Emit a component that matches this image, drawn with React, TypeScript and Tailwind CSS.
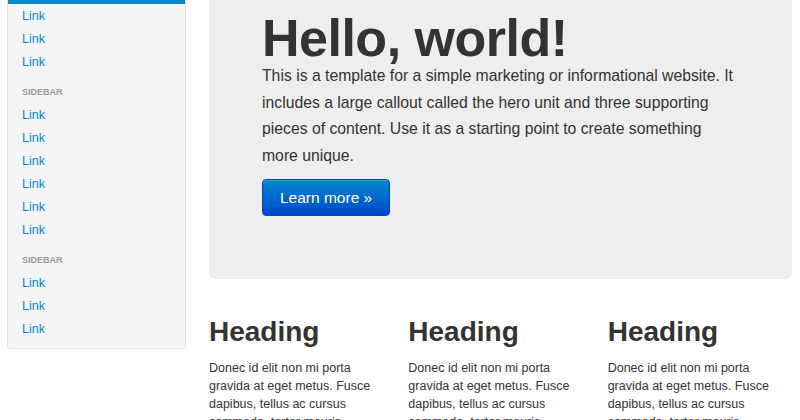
const links1 = ["Link", "Link", "Link"];
const links2 = ["Link", "Link", "Link", "Link", "Link", "Link"];
const links3 = ["Link", "Link", "Link"];

const body =
  "Donec id elit non mi porta gravida at eget metus. Fusce dapibus, tellus ac cursus commodo, tortor mauris condimentum nibh, ut fermentum massa justo sit amet risus. Etiam porta sem malesuada magna mollis euismod. Donec sed odio dui.";

function NavLink({ label }: { label: string }) {
  return (
    <li>
      <a href="#" className="block px-[14px] leading-[23px] text-[12.5px] text-[#0088cc]">
        {label}
      </a>
    </li>
  );
}

function NavHeader({ label }: { label: string }) {
  return (
    <li className="mt-[7px] px-[14px] leading-[23px] text-[9px] font-bold uppercase text-[#999999]">
      {label}
    </li>
  );
}

function Sidebar() {
  return (
    <div className="w-[179px] shrink-0 self-start rounded-b-[4px] border-x border-b border-[#e3e3e3] bg-[#f5f5f5] pb-[7px] shadow-[inset_0_1px_1px_rgba(0,0,0,0.05)]">
      <div className="h-[4px] bg-[#0088cc]" />
      <ul className="pt-[1px]">
        {links1.map((l, i) => (
          <NavLink key={"a" + i} label={l} />
        ))}
        <NavHeader label="Sidebar" />
        {links2.map((l, i) => (
          <NavLink key={"b" + i} label={l} />
        ))}
        <NavHeader label="Sidebar" />
        {links3.map((l, i) => (
          <NavLink key={"c" + i} label={l} />
        ))}
      </ul>
    </div>
  );
}

function Column() {
  return (
    <div>
      <h2 className="text-[28px] font-bold leading-[40px] text-[#333333]">Heading</h2>
      <p className="mt-[7px] text-[12.5px] leading-[18px] text-[#333333]">{body}</p>
    </div>
  );
}

export default function App() {
  return (
    <div
      className="h-[420px] w-[800px] overflow-hidden bg-white"
      style={{ fontFamily: '"Liberation Sans", Arial, sans-serif' }}
    >
      <div className="flex gap-[23px] pl-[7px] pr-[8px]">
        <Sidebar />
        <div className="flex-1">
          <div className="rounded-b-[6px] bg-[#eeeeee] pl-[53px] pr-[53px] pt-[13px] pb-[63px]">
            <h1 className="text-[52px] font-bold leading-[50px] tracking-[-0.5px] text-[#333333]">Hello, world!</h1>
            <p className="text-[15.75px] leading-[26.5px] text-[#333333]">
              This is a template for a simple marketing or informational website. It includes a large callout
              called the hero unit and three supporting pieces of content. Use it as a starting point to create
              something more unique.
            </p>
            <a
              href="#"
              className="mt-[10px] inline-block rounded-[4px] border border-[#0044cc] bg-gradient-to-b from-[#0088cc] to-[#0044cc] px-[17px] py-[8px] text-[15.5px] leading-[19px] text-white shadow-[inset_0_1px_0_rgba(255,255,255,0.2)]"
            >
              Learn more »
            </a>
          </div>
          <div className="mt-[33px] grid grid-cols-3 gap-x-[15px]">
            <Column />
            <Column />
            <Column />
          </div>
        </div>
      </div>
    </div>
  );
}
